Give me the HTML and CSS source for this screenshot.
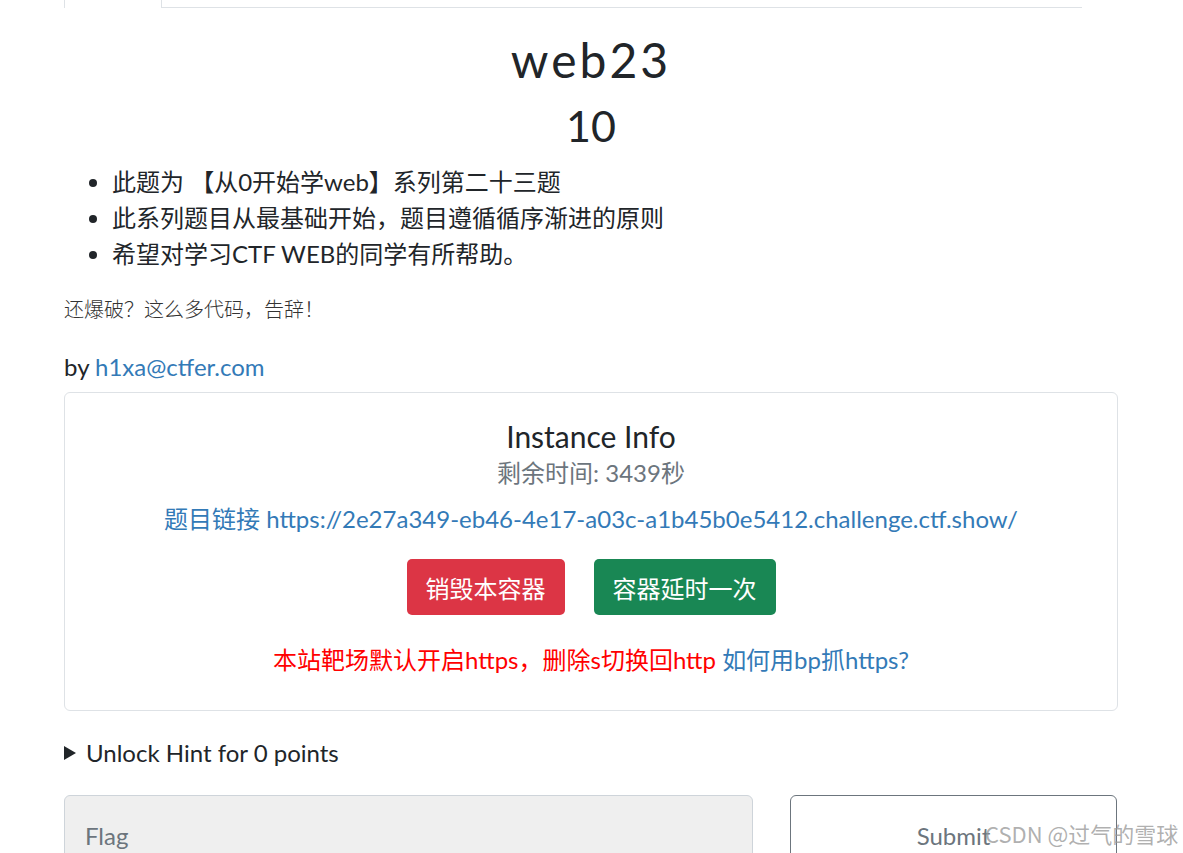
FILE: index.html
```html
<!DOCTYPE html>
<html lang="zh-CN">
<head>
  <meta charset="UTF-8">
  <meta name="viewport" content="width=device-width, initial-scale=1">
  <title>web23</title>
  <link rel="stylesheet" href="styles.css">
</head>
<body>

<div class="page">
  <div class="tabs">
    <div class="tab-active"></div>
    <div class="tab-rest"></div>
  </div>

  <h2 class="chal-name">web23</h2>
  <h3 class="chal-value">10</h3>

  <ul class="chal-desc">
    <li>此题为 【从0开始学web】系列第二十三题</li>
    <li>此系列题目从最基础开始，题目遵循循序渐进的原则</li>
    <li>希望对学习CTF WEB的同学有所帮助。</li>
  </ul>

  <p class="chal-note">还爆破？这么多代码，告辞！</p>

  <p class="chal-author">by <a href="#">h1xa@ctfer.com</a></p>

  <div class="card">
    <h4 class="card-title">Instance Info</h4>
    <div class="card-time">剩余时间: 3439秒</div>
    <div class="card-link"><a href="#">题目链接 https://2e27a349-eb46-4e17-a03c-a1b45b0e5412.challenge.ctf.show/</a></div>
    <div class="card-actions">
      <button class="btn btn-danger" type="button">销毁本容器</button>
      <button class="btn btn-success" type="button">容器延时一次</button>
    </div>
    <div class="card-warn">
      <span class="warn-red">本站靶场默认开启https，删除s切换回http</span> <a href="#">如何用bp抓https?</a>
    </div>
  </div>

  <details class="hint">
    <summary>Unlock Hint for 0 points</summary>
  </details>

  <div class="submit-row">
    <input class="flag-input" type="text" placeholder="Flag">
    <button class="btn-submit" type="button">Submit</button>
  </div>
</div>

<div class="watermark">CSDN @过气的雪球</div>

</body>
</html>
```

FILE: styles.css
```css
body {
  margin: 0;
  font-family: Lato, "Noto Sans CJK SC", sans-serif;
  color: #212529;
  background: #fff;
  overflow: hidden;
}

a {
  color: #337ab7;
  text-decoration: none;
}

.page {
  width: 1054px;
  margin: 0 0 0 64px;
}

.tabs {
  display: flex;
  width: 1018px;
  height: 8px;
}

.tab-active {
  width: 98px;
  box-sizing: border-box;
  border-left: 1px solid #dee2e6;
  border-right: 1px solid #dee2e6;
}

.tab-rest {
  flex: 1;
  border-bottom: 1px solid #dee2e6;
}

.chal-name {
  margin: 23px 0 0;
  font-size: 48px;
  font-weight: 400;
  line-height: 1.2;
  text-align: center;
  letter-spacing: 3px;
}

.chal-value {
  margin: 11px 0 0;
  font-size: 43px;
  font-weight: 400;
  line-height: 1.2;
  text-align: center;
}

.chal-desc {
  margin: 13px 0 0;
  padding-left: 48px;
  font-size: 24px;
  line-height: 36px;
}

.chal-note {
  margin: 22px 0 0;
  font-family: "Noto Sans CJK SC", sans-serif;
  font-weight: 300;
  font-size: 20px;
  line-height: 30px;
  color: #333;
}

.chal-author {
  margin: 26px 0 0;
  font-size: 24px;
  line-height: 33px;
}

.card {
  margin-top: 9px;
  border: 1px solid #dee2e6;
  border-radius: 6px;
  padding: 25px 20px 34px;
  text-align: center;
}

.card-title {
  margin: 0;
  font-size: 30px;
  font-weight: 400;
  line-height: 36px;
}

.card-time {
  margin-top: 4px;
  font-size: 24px;
  line-height: 30px;
  color: #6c757d;
}

.card-link {
  margin-top: 14px;
  font-size: 24px;
  line-height: 33px;
}

.card-actions {
  display: flex;
  justify-content: center;
  gap: 29px;
  margin-top: 24px;
}

.btn {
  height: 56px;
  padding: 0 19px;
  border: none;
  border-radius: 5px;
  font-family: Lato, "Noto Sans CJK SC", sans-serif;
  font-size: 24px;
  color: #fff;
  cursor: pointer;
}

.btn-danger {
  background-color: #dc3545;
}

.btn-success {
  background-color: #198754;
}

.card-warn {
  margin-top: 28px;
  font-size: 24px;
  line-height: 33px;
}

.warn-red {
  color: #ff0000;
}

.hint {
  margin-top: 25px;
  font-size: 24px;
  line-height: 33px;
}

.hint summary {
  list-style: none;
  display: flex;
  align-items: center;
  gap: 10px;
  cursor: pointer;
}

.hint summary::-webkit-details-marker {
  display: none;
}

.hint summary::before {
  content: "";
  width: 0;
  height: 0;
  border-top: 7px solid transparent;
  border-bottom: 7px solid transparent;
  border-left: 12px solid #212529;
}

.submit-row {
  display: flex;
  gap: 37px;
  margin-top: 26px;
}

.flag-input {
  width: 689px;
  height: 80px;
  box-sizing: border-box;
  padding: 0 20px;
  background: #efefef;
  border: 1px solid #ced4da;
  border-radius: 6px;
  font-family: Lato, sans-serif;
  font-size: 24px;
  color: #495057;
}

.flag-input::placeholder {
  color: #6c757d;
}

.btn-submit {
  width: 327px;
  height: 80px;
  background: #fff;
  border: 1px solid #6c757d;
  border-radius: 6px;
  font-family: Lato, sans-serif;
  font-size: 24px;
  color: #6c757d;
}

.watermark {
  position: absolute;
  left: 985px;
  top: 818px;
  font-family: "Noto Sans CJK SC", sans-serif;
  font-size: 22px;
  line-height: 30px;
  color: rgba(150, 150, 150, 0.75);
  white-space: nowrap;
}
```
